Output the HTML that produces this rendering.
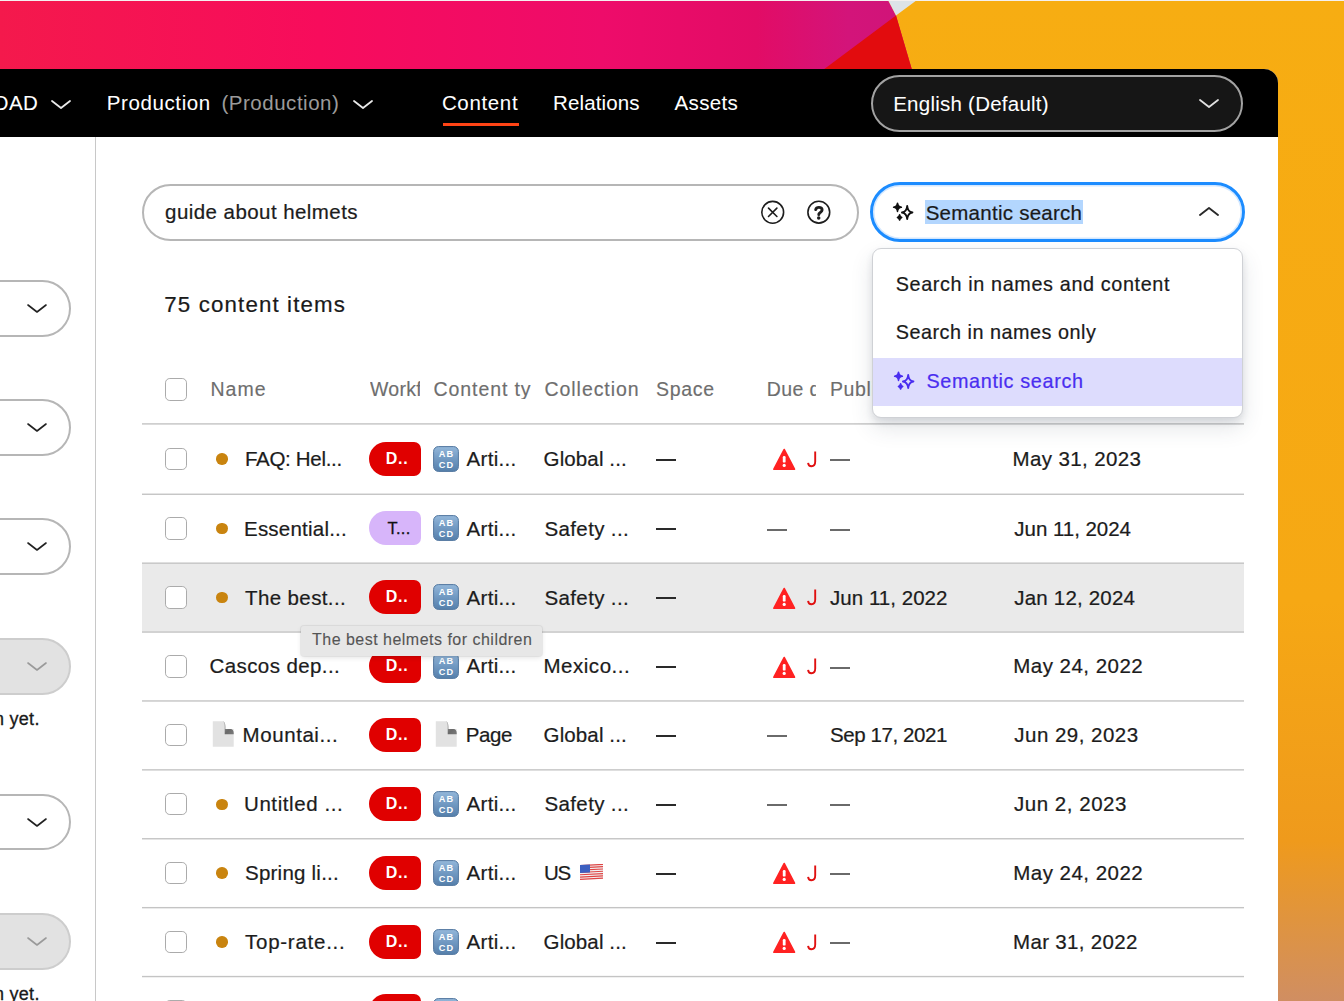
<!DOCTYPE html>
<html><head><meta charset="utf-8">
<style>
*{box-sizing:border-box;margin:0;padding:0}
html,body{width:1344px;height:1001px;overflow:hidden}
body{position:relative;font-family:"Liberation Sans",sans-serif;background:#f0a010}
.abs{position:absolute;display:block}
.t{position:absolute;white-space:nowrap;line-height:1;font-family:"Liberation Sans",sans-serif;-webkit-text-stroke-width:0.22px}
.pill{position:absolute;border-radius:40px}
.cb{position:absolute;width:22.5px;height:22.5px;border:1.7px solid #ababab;border-radius:4.8px;background:#fff}
.sep{position:absolute;left:142px;width:1102px;height:1.5px;background:#c9c9c9}
.wp{position:absolute;width:52px;height:34px;border-radius:17px 7px 7px 17px}
.dot{position:absolute;width:11.5px;height:11.5px;border-radius:50%;background:#c9840f}
.dash{position:absolute;height:2px;background:#2a2a2a}
.dashg{position:absolute;height:2px;background:#6a6a6a}
</style></head><body>

<svg width="1344" height="1001" viewBox="0 0 1344 1001" style="position:absolute;left:0;top:0">
<defs>
<linearGradient id="pk" x1="0" y1="0" x2="1" y2="0">
<stop offset="0" stop-color="#f4194c"/>
<stop offset="0.35" stop-color="#f70c5c"/>
<stop offset="0.66" stop-color="#ee0c6a"/>
<stop offset="0.83" stop-color="#e20c66"/>
<stop offset="0.93" stop-color="#d3147a"/>
<stop offset="1" stop-color="#d01478"/>
</linearGradient>
<linearGradient id="or" x1="0" y1="0" x2="0" y2="1">
<stop offset="0" stop-color="#f7ad12"/>
<stop offset="0.6" stop-color="#f6a814"/>
<stop offset="0.84" stop-color="#ef9a1c"/>
<stop offset="1" stop-color="#d08e62"/>
</linearGradient>
</defs>
<rect x="0" y="0" width="1344" height="1001" fill="url(#or)"/>
<path d="M0 0 H888 L896 15.5 L912 70 H0 Z" fill="url(#pk)"/>
<path d="M823 70 L896 15.5 L912 70 Z" fill="#e20c0e"/>
<path d="M888 0 H917 L896 15.5 Z" fill="#dde3e8"/>
<rect x="0" y="0" width="1344" height="1" fill="#f4f0f0"/>
</svg>

<div style="position:absolute;left:-20px;top:69px;width:1298px;height:960px;background:#fff;border-top-right-radius:14px;overflow:hidden"><div style="position:absolute;left:20px;top:-69px;width:1344px;height:1001px">
<div class="abs" style="left:-20px;top:69px;width:1298px;height:68.4px;background:#000"></div>
<div class="t" style="left:-19.22px;top:93.38px;font-size:20.5px;color:#fff;letter-spacing:0.400px;-webkit-text-stroke-width:0.05px">LOAD</div>
<svg class="abs" style="left:51px;top:99.5px" width="20" height="9" viewBox="0 0 20 9"><path d="M1 1 L10.0 8 L19 1" fill="none" stroke="#e8e8e8" stroke-width="1.8" stroke-linecap="round" stroke-linejoin="round"/></svg>
<div class="t" style="left:106.80px;top:93.38px;font-size:20.5px;color:#fff;letter-spacing:0.600px;-webkit-text-stroke-width:0.05px">Production</div>
<div class="t" style="left:221.50px;top:93.38px;font-size:20.5px;color:#9b9b9b;letter-spacing:0.515px;-webkit-text-stroke-width:0.05px">(Production)</div>
<svg class="abs" style="left:352.5px;top:99.5px" width="20" height="9" viewBox="0 0 20 9"><path d="M1 1 L10.0 8 L19 1" fill="none" stroke="#e8e8e8" stroke-width="1.8" stroke-linecap="round" stroke-linejoin="round"/></svg>
<div class="t" style="left:441.90px;top:93.38px;font-size:20.5px;color:#fff;letter-spacing:0.649px;-webkit-text-stroke-width:0.05px">Content</div>
<div class="abs" style="left:443px;top:123px;width:76px;height:3px;background:#ff4415"></div>
<div class="t" style="left:553.00px;top:93.38px;font-size:20.5px;color:#fff;letter-spacing:0.123px;-webkit-text-stroke-width:0.05px">Relations</div>
<div class="t" style="left:674.60px;top:93.38px;font-size:20.5px;color:#fff;letter-spacing:0.326px;-webkit-text-stroke-width:0.05px">Assets</div>
<div class="pill" style="left:871px;top:75px;width:372px;height:57px;background:#161616;border:2px solid #a2a2a2"></div>
<div class="t" style="left:893.20px;top:93.78px;font-size:20.5px;color:#fff;letter-spacing:0.243px;-webkit-text-stroke-width:0.05px">English (Default)</div>
<svg class="abs" style="left:1199px;top:99px" width="20" height="9" viewBox="0 0 20 9"><path d="M1 1 L10.0 8 L19 1" fill="none" stroke="#e0e0e0" stroke-width="1.8" stroke-linecap="round" stroke-linejoin="round"/></svg>
<div class="abs" style="left:94.6px;top:137px;width:1.3px;height:864px;background:#c8c8c8"></div>
<div class="pill" style="left:-300px;top:280px;width:370.5px;height:56.5px;background:#fff;border:2px solid #b6b6b6"></div>
<svg class="abs" style="left:27px;top:304px" width="20" height="9" viewBox="0 0 20 9"><path d="M1 1 L10.0 8 L19 1" fill="none" stroke="#222" stroke-width="1.6" stroke-linecap="round" stroke-linejoin="round"/></svg>
<div class="pill" style="left:-300px;top:399px;width:370.5px;height:56.5px;background:#fff;border:2px solid #b6b6b6"></div>
<svg class="abs" style="left:27px;top:423px" width="20" height="9" viewBox="0 0 20 9"><path d="M1 1 L10.0 8 L19 1" fill="none" stroke="#222" stroke-width="1.6" stroke-linecap="round" stroke-linejoin="round"/></svg>
<div class="pill" style="left:-300px;top:518px;width:370.5px;height:56.5px;background:#fff;border:2px solid #b6b6b6"></div>
<svg class="abs" style="left:27px;top:542px" width="20" height="9" viewBox="0 0 20 9"><path d="M1 1 L10.0 8 L19 1" fill="none" stroke="#222" stroke-width="1.6" stroke-linecap="round" stroke-linejoin="round"/></svg>
<div class="pill" style="left:-300px;top:638px;width:370.5px;height:56.5px;background:#e2e2e2;border:2px solid #cdcdcd"></div>
<svg class="abs" style="left:27px;top:662px" width="20" height="9" viewBox="0 0 20 9"><path d="M1 1 L10.0 8 L19 1" fill="none" stroke="#9a9a9a" stroke-width="1.6" stroke-linecap="round" stroke-linejoin="round"/></svg>
<div class="pill" style="left:-300px;top:793.5px;width:370.5px;height:56.5px;background:#fff;border:2px solid #b6b6b6"></div>
<svg class="abs" style="left:27px;top:817.5px" width="20" height="9" viewBox="0 0 20 9"><path d="M1 1 L10.0 8 L19 1" fill="none" stroke="#222" stroke-width="1.6" stroke-linecap="round" stroke-linejoin="round"/></svg>
<div class="pill" style="left:-300px;top:913px;width:370.5px;height:56.5px;background:#e2e2e2;border:2px solid #cdcdcd"></div>
<svg class="abs" style="left:27px;top:937px" width="20" height="9" viewBox="0 0 20 9"><path d="M1 1 L10.0 8 L19 1" fill="none" stroke="#9a9a9a" stroke-width="1.6" stroke-linecap="round" stroke-linejoin="round"/></svg>
<div class="t" style="left:-6.12px;top:709.50px;font-size:18px;color:#1a1a1a;letter-spacing:0.300px;-webkit-text-stroke:0.3px #1a1a1a">n yet.</div>
<div class="t" style="left:-6.12px;top:985.00px;font-size:18px;color:#1a1a1a;letter-spacing:0.300px;-webkit-text-stroke:0.3px #1a1a1a">n yet.</div>
<div class="pill" style="left:142px;top:184px;width:716.5px;height:56.5px;background:#fff;border:2px solid #b6b6b6"></div>
<div class="t" style="left:165.10px;top:202.17px;font-size:20.5px;color:#1c1c1c;letter-spacing:0.434px">guide about helmets</div>
<svg class="abs" style="left:760px;top:200px" width="25" height="25" viewBox="0 0 25 25"><circle cx="12.7" cy="12.3" r="10.9" fill="none" stroke="#1e1e1e" stroke-width="1.6"/><path d="M8.5 8.1 L16.9 16.5 M16.9 8.1 L8.5 16.5" stroke="#1e1e1e" stroke-width="1.6" stroke-linecap="round"/></svg>
<svg class="abs" style="left:806px;top:200px" width="25" height="25" viewBox="0 0 25 25"><circle cx="12.8" cy="12.2" r="10.9" fill="none" stroke="#1e1e1e" stroke-width="1.6"/><path d="M9.7 9.6 C10.1 8.1 11.3 7.4 12.9 7.4 C14.7 7.4 16.1 8.4 16.1 10 C16.1 11.8 13.8 12.3 13 13.7 L12.8 14.6" fill="none" stroke="#1e1e1e" stroke-width="2.9" stroke-linecap="round" stroke-linejoin="round"/><circle cx="12.7" cy="18.1" r="1.75" fill="#1e1e1e"/></svg>
<div class="pill" style="left:869.5px;top:182px;width:375px;height:60px;background:#fff;border:3px solid #1c8cff;box-shadow:inset 0 0 0 1.5px #d4e8ff"></div>
<svg class="abs" style="left:886px;top:196px" width="32" height="32" viewBox="0 0 32 32">
<path d="M21.2 9.8 Q21.75 15.95 26.5 16.5 Q21.75 17.05 21.2 23.2 Q20.65 17.05 15.899999999999999 16.5 Q20.65 15.95 21.2 9.8 Z" fill="none" stroke="#111" stroke-width="1.8" stroke-linejoin="round"/>
<path d="M11.5 7.200000000000001 Q11.95 10.850000000000001 15.4 11.3 Q11.95 11.75 11.5 15.4 Q11.05 11.75 7.6 11.3 Q11.05 10.850000000000001 11.5 7.200000000000001 Z" fill="#111" stroke="#111" stroke-width="1.5" stroke-linejoin="round"/>
<path d="M13.6 18.7 Q14.049999999999999 20.95 15.8 21.4 Q14.049999999999999 21.849999999999998 13.6 24.099999999999998 Q13.15 21.849999999999998 11.399999999999999 21.4 Q13.15 20.95 13.6 18.7 Z" fill="#111" stroke="#111" stroke-width="1.5" stroke-linejoin="round"/>
</svg>
<div class="abs" style="left:925px;top:200px;width:158px;height:24px;background:#b3d6fe"></div>
<div class="t" style="left:925.70px;top:202.77px;font-size:20.5px;color:#1a1a1a;letter-spacing:0.259px">Semantic search</div>
<svg class="abs" style="left:1199px;top:206.5px" width="20" height="9" viewBox="0 0 20 9"><path d="M1 8 L10.0 1 L19 8" fill="none" stroke="#2a2a2a" stroke-width="1.9" stroke-linecap="round" stroke-linejoin="round"/></svg>
<div class="t" style="left:164.30px;top:294.05px;font-size:22.3px;color:#1a1a1a;letter-spacing:1.136px">75 content items</div>
<div class="cb" style="left:164.5px;top:378.2px"></div>
<div class="t" style="left:210.40px;top:379.93px;font-size:19.5px;color:#6e6e6e;letter-spacing:1.076px;-webkit-text-stroke-width:0.15px">Name</div>
<div class="t" style="left:544.50px;top:379.93px;font-size:19.5px;color:#6e6e6e;letter-spacing:0.946px;-webkit-text-stroke-width:0.15px">Collection</div>
<div class="t" style="left:656.00px;top:379.93px;font-size:19.5px;color:#6e6e6e;letter-spacing:0.688px;-webkit-text-stroke-width:0.15px">Space</div>
<div class="t" style="left:370.00px;top:379.93px;font-size:19.5px;color:#6e6e6e;letter-spacing:0.270px;width:49.5px;overflow:hidden;-webkit-text-stroke-width:0.15px">Workflow</div>
<div class="t" style="left:433.60px;top:379.93px;font-size:19.5px;color:#6e6e6e;letter-spacing:0.903px;width:97.5px;overflow:hidden;-webkit-text-stroke-width:0.15px">Content type</div>
<div class="t" style="left:766.70px;top:379.93px;font-size:19.5px;color:#6e6e6e;letter-spacing:0.436px;width:49.5px;overflow:hidden;-webkit-text-stroke-width:0.15px">Due date</div>
<div class="t" style="left:830.00px;top:379.93px;font-size:19.5px;color:#6e6e6e;letter-spacing:0.568px;width:42px;overflow:hidden;-webkit-text-stroke-width:0.15px">Published</div>
<div class="abs" style="left:142px;top:563.16px;width:1102px;height:68.90px;background:#eaeaea"></div>
<svg class="abs" style="left:142px;top:0px" width="1102" height="1001" viewBox="0 0 1102 1001"><rect x="0" y="423.20" width="1102" height="1.4" fill="#c4c4c4"/><rect x="0" y="493.56" width="1102" height="1.4" fill="#c4c4c4"/><rect x="0" y="562.46" width="1102" height="1.4" fill="#c4c4c4"/><rect x="0" y="631.36" width="1102" height="1.4" fill="#c4c4c4"/><rect x="0" y="700.26" width="1102" height="1.4" fill="#c4c4c4"/><rect x="0" y="769.16" width="1102" height="1.4" fill="#c4c4c4"/><rect x="0" y="838.06" width="1102" height="1.4" fill="#c4c4c4"/><rect x="0" y="906.96" width="1102" height="1.4" fill="#c4c4c4"/><rect x="0" y="975.86" width="1102" height="1.4" fill="#c4c4c4"/></svg>
<div class="cb" style="left:164.5px;top:447.58px"></div>
<div class="dot" style="left:216.3px;top:453.33px"></div>
<div class="t" style="left:245.00px;top:449.05px;font-size:20.5px;color:#1c1c1c;letter-spacing:-0.315px">FAQ: Hel...</div>
<div class="wp" style="left:369.3px;top:441.58px;background:#e00000"></div>
<div class="t" style="left:385.80px;top:450.58px;font-size:16px;color:#fff;letter-spacing:0.700px;font-weight:bold;-webkit-text-stroke-width:0">D..</div>
<svg class="abs" style="left:433px;top:445.58px" width="26" height="26" viewBox="0 0 26 26"><defs><linearGradient id="ga0" x1="0" y1="0" x2="0" y2="1"><stop offset="0" stop-color="#93b7da"/><stop offset="0.5" stop-color="#7199c2"/><stop offset="1" stop-color="#557fab"/></linearGradient></defs><rect x="0.6" y="0.6" width="24.8" height="24.8" rx="4.8" fill="url(#ga0)" stroke="#52779f" stroke-width="1"/><text x="13.5" y="11.4" text-anchor="middle" font-family="Liberation Sans" font-weight="bold" font-size="9.2" letter-spacing="1" fill="#fff">AB</text><text x="13.5" y="21.6" text-anchor="middle" font-family="Liberation Sans" font-weight="bold" font-size="9.2" letter-spacing="1" fill="#fff">CD</text></svg>
<div class="t" style="left:466.50px;top:449.05px;font-size:20.5px;color:#1c1c1c;letter-spacing:0.326px">Arti...</div>
<div class="t" style="left:543.60px;top:449.05px;font-size:20.5px;color:#1c1c1c;letter-spacing:0.117px">Global ...</div>
<div class="dash" style="left:655.5px;top:458.58px;width:20px"></div>
<svg class="abs" style="left:773px;top:448.28px" width="23" height="23" viewBox="0 0 23 23"><path d="M11.2 1.6 L21.4 21.2 H1 Z" fill="#ff2222" stroke="#ff2222" stroke-width="1.8" stroke-linejoin="round"/><rect x="9.8" y="8" width="2.8" height="6.6" rx="1.2" fill="#fff"/><circle cx="11.2" cy="17.4" r="1.6" fill="#fff"/></svg>
<svg class="abs" style="left:805px;top:450.88px" width="14" height="18" viewBox="0 0 14 18"><path d="M10.2 0.5 V10.6 C10.2 13.8 8.6 15.3 6.5 15.3 C4.5 15.3 3.3 14.1 3.1 11.9" fill="none" stroke="#e01010" stroke-width="1.9" stroke-linecap="butt"/></svg>
<div class="dashg" style="left:830px;top:459.08px;width:20px"></div>
<div class="t" style="left:1012.60px;top:449.05px;font-size:20.5px;color:#1c1c1c;letter-spacing:0.371px">May 31, 2023</div>
<div class="cb" style="left:164.5px;top:517.21px"></div>
<div class="dot" style="left:216.3px;top:522.96px"></div>
<div class="t" style="left:244.00px;top:518.69px;font-size:20.5px;color:#1c1c1c;letter-spacing:0.221px">Essential...</div>
<div class="wp" style="left:369.3px;top:511.21px;background:#d7b5fa"></div>
<div class="t" style="left:387.50px;top:519.79px;font-size:16.5px;color:#111;letter-spacing:0.261px;-webkit-text-stroke:0.3px #111">T...</div>
<svg class="abs" style="left:433px;top:515.21px" width="26" height="26" viewBox="0 0 26 26"><defs><linearGradient id="ga1" x1="0" y1="0" x2="0" y2="1"><stop offset="0" stop-color="#93b7da"/><stop offset="0.5" stop-color="#7199c2"/><stop offset="1" stop-color="#557fab"/></linearGradient></defs><rect x="0.6" y="0.6" width="24.8" height="24.8" rx="4.8" fill="url(#ga1)" stroke="#52779f" stroke-width="1"/><text x="13.5" y="11.4" text-anchor="middle" font-family="Liberation Sans" font-weight="bold" font-size="9.2" letter-spacing="1" fill="#fff">AB</text><text x="13.5" y="21.6" text-anchor="middle" font-family="Liberation Sans" font-weight="bold" font-size="9.2" letter-spacing="1" fill="#fff">CD</text></svg>
<div class="t" style="left:466.50px;top:518.69px;font-size:20.5px;color:#1c1c1c;letter-spacing:0.326px">Arti...</div>
<div class="t" style="left:544.50px;top:518.69px;font-size:20.5px;color:#1c1c1c;letter-spacing:0.366px">Safety ...</div>
<div class="dash" style="left:655.5px;top:528.21px;width:20px"></div>
<div class="dashg" style="left:767px;top:528.71px;width:20px"></div>
<div class="dashg" style="left:830px;top:528.71px;width:20px"></div>
<div class="t" style="left:1014.30px;top:518.69px;font-size:20.5px;color:#1c1c1c;letter-spacing:-0.029px">Jun 11, 2024</div>
<div class="cb" style="left:164.5px;top:586.1099999999999px"></div>
<div class="dot" style="left:216.3px;top:591.86px"></div>
<div class="t" style="left:245.00px;top:587.58px;font-size:20.5px;color:#1c1c1c;letter-spacing:0.384px">The best...</div>
<div class="wp" style="left:369.3px;top:580.11px;background:#e00000"></div>
<div class="t" style="left:385.80px;top:589.11px;font-size:16px;color:#fff;letter-spacing:0.700px;font-weight:bold;-webkit-text-stroke-width:0">D..</div>
<svg class="abs" style="left:433px;top:584.1099999999999px" width="26" height="26" viewBox="0 0 26 26"><defs><linearGradient id="ga2" x1="0" y1="0" x2="0" y2="1"><stop offset="0" stop-color="#93b7da"/><stop offset="0.5" stop-color="#7199c2"/><stop offset="1" stop-color="#557fab"/></linearGradient></defs><rect x="0.6" y="0.6" width="24.8" height="24.8" rx="4.8" fill="url(#ga2)" stroke="#52779f" stroke-width="1"/><text x="13.5" y="11.4" text-anchor="middle" font-family="Liberation Sans" font-weight="bold" font-size="9.2" letter-spacing="1" fill="#fff">AB</text><text x="13.5" y="21.6" text-anchor="middle" font-family="Liberation Sans" font-weight="bold" font-size="9.2" letter-spacing="1" fill="#fff">CD</text></svg>
<div class="t" style="left:466.50px;top:587.58px;font-size:20.5px;color:#1c1c1c;letter-spacing:0.326px">Arti...</div>
<div class="t" style="left:544.50px;top:587.58px;font-size:20.5px;color:#1c1c1c;letter-spacing:0.366px">Safety ...</div>
<div class="dash" style="left:655.5px;top:597.11px;width:20px"></div>
<svg class="abs" style="left:773px;top:586.81px" width="23" height="23" viewBox="0 0 23 23"><path d="M11.2 1.6 L21.4 21.2 H1 Z" fill="#ff2222" stroke="#ff2222" stroke-width="1.8" stroke-linejoin="round"/><rect x="9.8" y="8" width="2.8" height="6.6" rx="1.2" fill="#fff"/><circle cx="11.2" cy="17.4" r="1.6" fill="#fff"/></svg>
<svg class="abs" style="left:805px;top:589.41px" width="14" height="18" viewBox="0 0 14 18"><path d="M10.2 0.5 V10.6 C10.2 13.8 8.6 15.3 6.5 15.3 C4.5 15.3 3.3 14.1 3.1 11.9" fill="none" stroke="#e01010" stroke-width="1.9" stroke-linecap="butt"/></svg>
<div class="t" style="left:830.10px;top:587.58px;font-size:20.5px;color:#1c1c1c;letter-spacing:0.025px">Jun 11, 2022</div>
<div class="t" style="left:1014.30px;top:587.58px;font-size:20.5px;color:#1c1c1c;letter-spacing:0.187px">Jan 12, 2024</div>
<div class="cb" style="left:164.5px;top:655.01px"></div>
<div class="t" style="left:209.50px;top:656.49px;font-size:20.5px;color:#1c1c1c;letter-spacing:0.404px">Cascos dep...</div>
<div class="wp" style="left:369.3px;top:649.01px;background:#e00000"></div>
<div class="t" style="left:385.80px;top:658.01px;font-size:16px;color:#fff;letter-spacing:0.700px;font-weight:bold;-webkit-text-stroke-width:0">D..</div>
<svg class="abs" style="left:433px;top:653.01px" width="26" height="26" viewBox="0 0 26 26"><defs><linearGradient id="ga3" x1="0" y1="0" x2="0" y2="1"><stop offset="0" stop-color="#93b7da"/><stop offset="0.5" stop-color="#7199c2"/><stop offset="1" stop-color="#557fab"/></linearGradient></defs><rect x="0.6" y="0.6" width="24.8" height="24.8" rx="4.8" fill="url(#ga3)" stroke="#52779f" stroke-width="1"/><text x="13.5" y="11.4" text-anchor="middle" font-family="Liberation Sans" font-weight="bold" font-size="9.2" letter-spacing="1" fill="#fff">AB</text><text x="13.5" y="21.6" text-anchor="middle" font-family="Liberation Sans" font-weight="bold" font-size="9.2" letter-spacing="1" fill="#fff">CD</text></svg>
<div class="t" style="left:466.50px;top:656.49px;font-size:20.5px;color:#1c1c1c;letter-spacing:0.326px">Arti...</div>
<div class="t" style="left:543.50px;top:656.49px;font-size:20.5px;color:#1c1c1c;letter-spacing:0.522px">Mexico...</div>
<div class="dash" style="left:655.5px;top:666.01px;width:20px"></div>
<svg class="abs" style="left:773px;top:655.71px" width="23" height="23" viewBox="0 0 23 23"><path d="M11.2 1.6 L21.4 21.2 H1 Z" fill="#ff2222" stroke="#ff2222" stroke-width="1.8" stroke-linejoin="round"/><rect x="9.8" y="8" width="2.8" height="6.6" rx="1.2" fill="#fff"/><circle cx="11.2" cy="17.4" r="1.6" fill="#fff"/></svg>
<svg class="abs" style="left:805px;top:658.31px" width="14" height="18" viewBox="0 0 14 18"><path d="M10.2 0.5 V10.6 C10.2 13.8 8.6 15.3 6.5 15.3 C4.5 15.3 3.3 14.1 3.1 11.9" fill="none" stroke="#e01010" stroke-width="1.9" stroke-linecap="butt"/></svg>
<div class="dashg" style="left:830px;top:666.51px;width:20px"></div>
<div class="t" style="left:1013.30px;top:656.49px;font-size:20.5px;color:#1c1c1c;letter-spacing:0.471px">May 24, 2022</div>
<div class="cb" style="left:164.5px;top:723.9100000000001px"></div>
<svg class="abs" style="left:212px;top:721.4100000000001px" width="23" height="27" viewBox="0 0 23 27"><defs><linearGradient id="gf4" x1="0" y1="0" x2="1" y2="1"><stop offset="0" stop-color="#a0a0a0"/><stop offset="0.6" stop-color="#6a6a6a"/><stop offset="1" stop-color="#7a7a7a"/></linearGradient></defs><path d="M0.8 0.3 H10.8 C12 0.3 12.8 1.6 12.8 3.2 V8 H21.7 V25.8 H0.8 Z" fill="#e2e2e2"/><path d="M10.8 0.3 C12.6 0.5 13.4 2.8 13.4 5.2 V7.9 H18.6 C20.6 7.9 21.7 9.8 21.7 12 V13.2 H12.7 V5 C12.7 2.6 12.2 1.1 10.8 0.3 Z" fill="url(#gf4)"/></svg>
<div class="t" style="left:242.60px;top:725.39px;font-size:20.5px;color:#1c1c1c;letter-spacing:0.564px">Mountai...</div>
<div class="wp" style="left:369.3px;top:717.91px;background:#e00000"></div>
<div class="t" style="left:385.80px;top:726.91px;font-size:16px;color:#fff;letter-spacing:0.700px;font-weight:bold;-webkit-text-stroke-width:0">D..</div>
<svg class="abs" style="left:435px;top:721.4100000000001px" width="23" height="27" viewBox="0 0 23 27"><defs><linearGradient id="gf104" x1="0" y1="0" x2="1" y2="1"><stop offset="0" stop-color="#a0a0a0"/><stop offset="0.6" stop-color="#6a6a6a"/><stop offset="1" stop-color="#7a7a7a"/></linearGradient></defs><path d="M0.8 0.3 H10.8 C12 0.3 12.8 1.6 12.8 3.2 V8 H21.7 V25.8 H0.8 Z" fill="#e2e2e2"/><path d="M10.8 0.3 C12.6 0.5 13.4 2.8 13.4 5.2 V7.9 H18.6 C20.6 7.9 21.7 9.8 21.7 12 V13.2 H12.7 V5 C12.7 2.6 12.2 1.1 10.8 0.3 Z" fill="url(#gf104)"/></svg>
<div class="t" style="left:465.70px;top:725.39px;font-size:20.5px;color:#1c1c1c;letter-spacing:-0.425px">Page</div>
<div class="t" style="left:543.60px;top:725.39px;font-size:20.5px;color:#1c1c1c;letter-spacing:0.117px">Global ...</div>
<div class="dash" style="left:655.5px;top:734.91px;width:20px"></div>
<div class="dashg" style="left:767px;top:735.41px;width:20px"></div>
<div class="t" style="left:830.00px;top:725.39px;font-size:20.5px;color:#1c1c1c;letter-spacing:-0.415px">Sep 17, 2021</div>
<div class="t" style="left:1014.30px;top:725.39px;font-size:20.5px;color:#1c1c1c;letter-spacing:0.478px">Jun 29, 2023</div>
<div class="cb" style="left:164.5px;top:792.81px"></div>
<div class="dot" style="left:216.3px;top:798.56px"></div>
<div class="t" style="left:244.00px;top:794.28px;font-size:20.5px;color:#1c1c1c;letter-spacing:0.582px">Untitled ...</div>
<div class="wp" style="left:369.3px;top:786.81px;background:#e00000"></div>
<div class="t" style="left:385.80px;top:795.81px;font-size:16px;color:#fff;letter-spacing:0.700px;font-weight:bold;-webkit-text-stroke-width:0">D..</div>
<svg class="abs" style="left:433px;top:790.81px" width="26" height="26" viewBox="0 0 26 26"><defs><linearGradient id="ga5" x1="0" y1="0" x2="0" y2="1"><stop offset="0" stop-color="#93b7da"/><stop offset="0.5" stop-color="#7199c2"/><stop offset="1" stop-color="#557fab"/></linearGradient></defs><rect x="0.6" y="0.6" width="24.8" height="24.8" rx="4.8" fill="url(#ga5)" stroke="#52779f" stroke-width="1"/><text x="13.5" y="11.4" text-anchor="middle" font-family="Liberation Sans" font-weight="bold" font-size="9.2" letter-spacing="1" fill="#fff">AB</text><text x="13.5" y="21.6" text-anchor="middle" font-family="Liberation Sans" font-weight="bold" font-size="9.2" letter-spacing="1" fill="#fff">CD</text></svg>
<div class="t" style="left:466.50px;top:794.28px;font-size:20.5px;color:#1c1c1c;letter-spacing:0.326px">Arti...</div>
<div class="t" style="left:544.50px;top:794.28px;font-size:20.5px;color:#1c1c1c;letter-spacing:0.366px">Safety ...</div>
<div class="dash" style="left:655.5px;top:803.81px;width:20px"></div>
<div class="dashg" style="left:767px;top:804.31px;width:20px"></div>
<div class="dashg" style="left:830px;top:804.31px;width:20px"></div>
<div class="t" style="left:1014.00px;top:794.28px;font-size:20.5px;color:#1c1c1c;letter-spacing:0.526px">Jun 2, 2023</div>
<div class="cb" style="left:164.5px;top:861.71px"></div>
<div class="dot" style="left:216.3px;top:867.46px"></div>
<div class="t" style="left:245.00px;top:863.19px;font-size:20.5px;color:#1c1c1c;letter-spacing:0.232px">Spring li...</div>
<div class="wp" style="left:369.3px;top:855.71px;background:#e00000"></div>
<div class="t" style="left:385.80px;top:864.71px;font-size:16px;color:#fff;letter-spacing:0.700px;font-weight:bold;-webkit-text-stroke-width:0">D..</div>
<svg class="abs" style="left:433px;top:859.71px" width="26" height="26" viewBox="0 0 26 26"><defs><linearGradient id="ga6" x1="0" y1="0" x2="0" y2="1"><stop offset="0" stop-color="#93b7da"/><stop offset="0.5" stop-color="#7199c2"/><stop offset="1" stop-color="#557fab"/></linearGradient></defs><rect x="0.6" y="0.6" width="24.8" height="24.8" rx="4.8" fill="url(#ga6)" stroke="#52779f" stroke-width="1"/><text x="13.5" y="11.4" text-anchor="middle" font-family="Liberation Sans" font-weight="bold" font-size="9.2" letter-spacing="1" fill="#fff">AB</text><text x="13.5" y="21.6" text-anchor="middle" font-family="Liberation Sans" font-weight="bold" font-size="9.2" letter-spacing="1" fill="#fff">CD</text></svg>
<div class="t" style="left:466.50px;top:863.19px;font-size:20.5px;color:#1c1c1c;letter-spacing:0.326px">Arti...</div>
<div class="t" style="left:544.00px;top:863.19px;font-size:20.5px;color:#1c1c1c;letter-spacing:-1.304px">US</div>
<svg class="abs" style="left:579.5px;top:864.21px" width="23" height="16" viewBox="0 0 23 16"><g transform="skewY(-3) translate(0 1)"><rect width="23" height="15" fill="#f2f2f2"/><rect x="0" y="0.00" width="23" height="1.15" fill="#df4444"/><rect x="0" y="2.30" width="23" height="1.15" fill="#df4444"/><rect x="0" y="4.60" width="23" height="1.15" fill="#df4444"/><rect x="0" y="6.90" width="23" height="1.15" fill="#df4444"/><rect x="0" y="9.20" width="23" height="1.15" fill="#df4444"/><rect x="0" y="11.50" width="23" height="1.15" fill="#df4444"/><rect x="0" y="13.80" width="23" height="1.15" fill="#df4444"/><rect x="0" y="0" width="10" height="8" fill="#3c5fc0"/></g></svg>
<div class="dash" style="left:655.5px;top:872.71px;width:20px"></div>
<svg class="abs" style="left:773px;top:862.4100000000001px" width="23" height="23" viewBox="0 0 23 23"><path d="M11.2 1.6 L21.4 21.2 H1 Z" fill="#ff2222" stroke="#ff2222" stroke-width="1.8" stroke-linejoin="round"/><rect x="9.8" y="8" width="2.8" height="6.6" rx="1.2" fill="#fff"/><circle cx="11.2" cy="17.4" r="1.6" fill="#fff"/></svg>
<svg class="abs" style="left:805px;top:865.01px" width="14" height="18" viewBox="0 0 14 18"><path d="M10.2 0.5 V10.6 C10.2 13.8 8.6 15.3 6.5 15.3 C4.5 15.3 3.3 14.1 3.1 11.9" fill="none" stroke="#e01010" stroke-width="1.9" stroke-linecap="butt"/></svg>
<div class="dashg" style="left:830px;top:873.21px;width:20px"></div>
<div class="t" style="left:1013.30px;top:863.19px;font-size:20.5px;color:#1c1c1c;letter-spacing:0.471px">May 24, 2022</div>
<div class="cb" style="left:164.5px;top:930.6100000000001px"></div>
<div class="dot" style="left:216.3px;top:936.36px"></div>
<div class="t" style="left:245.00px;top:932.09px;font-size:20.5px;color:#1c1c1c;letter-spacing:0.741px">Top-rate...</div>
<div class="wp" style="left:369.3px;top:924.61px;background:#e00000"></div>
<div class="t" style="left:385.80px;top:933.61px;font-size:16px;color:#fff;letter-spacing:0.700px;font-weight:bold;-webkit-text-stroke-width:0">D..</div>
<svg class="abs" style="left:433px;top:928.6100000000001px" width="26" height="26" viewBox="0 0 26 26"><defs><linearGradient id="ga7" x1="0" y1="0" x2="0" y2="1"><stop offset="0" stop-color="#93b7da"/><stop offset="0.5" stop-color="#7199c2"/><stop offset="1" stop-color="#557fab"/></linearGradient></defs><rect x="0.6" y="0.6" width="24.8" height="24.8" rx="4.8" fill="url(#ga7)" stroke="#52779f" stroke-width="1"/><text x="13.5" y="11.4" text-anchor="middle" font-family="Liberation Sans" font-weight="bold" font-size="9.2" letter-spacing="1" fill="#fff">AB</text><text x="13.5" y="21.6" text-anchor="middle" font-family="Liberation Sans" font-weight="bold" font-size="9.2" letter-spacing="1" fill="#fff">CD</text></svg>
<div class="t" style="left:466.50px;top:932.09px;font-size:20.5px;color:#1c1c1c;letter-spacing:0.326px">Arti...</div>
<div class="t" style="left:543.60px;top:932.09px;font-size:20.5px;color:#1c1c1c;letter-spacing:0.117px">Global ...</div>
<div class="dash" style="left:655.5px;top:941.61px;width:20px"></div>
<svg class="abs" style="left:773px;top:931.3100000000002px" width="23" height="23" viewBox="0 0 23 23"><path d="M11.2 1.6 L21.4 21.2 H1 Z" fill="#ff2222" stroke="#ff2222" stroke-width="1.8" stroke-linejoin="round"/><rect x="9.8" y="8" width="2.8" height="6.6" rx="1.2" fill="#fff"/><circle cx="11.2" cy="17.4" r="1.6" fill="#fff"/></svg>
<svg class="abs" style="left:805px;top:933.91px" width="14" height="18" viewBox="0 0 14 18"><path d="M10.2 0.5 V10.6 C10.2 13.8 8.6 15.3 6.5 15.3 C4.5 15.3 3.3 14.1 3.1 11.9" fill="none" stroke="#e01010" stroke-width="1.9" stroke-linecap="butt"/></svg>
<div class="dashg" style="left:830px;top:942.11px;width:20px"></div>
<div class="t" style="left:1013.00px;top:932.09px;font-size:20.5px;color:#1c1c1c;letter-spacing:0.328px">Mar 31, 2022</div>
<div class="cb" style="left:164.5px;top:999.51px"></div>
<div class="dot" style="left:216.3px;top:1005.26px"></div>
<div class="wp" style="left:369.3px;top:993.51px;background:#e00000"></div>
<div class="t" style="left:385.80px;top:1002.51px;font-size:16px;color:#fff;letter-spacing:0.700px;font-weight:bold;-webkit-text-stroke-width:0">D..</div>
<svg class="abs" style="left:433px;top:997.51px" width="26" height="26" viewBox="0 0 26 26"><defs><linearGradient id="ga8" x1="0" y1="0" x2="0" y2="1"><stop offset="0" stop-color="#93b7da"/><stop offset="0.5" stop-color="#7199c2"/><stop offset="1" stop-color="#557fab"/></linearGradient></defs><rect x="0.6" y="0.6" width="24.8" height="24.8" rx="4.8" fill="url(#ga8)" stroke="#52779f" stroke-width="1"/><text x="13.5" y="11.4" text-anchor="middle" font-family="Liberation Sans" font-weight="bold" font-size="9.2" letter-spacing="1" fill="#fff">AB</text><text x="13.5" y="21.6" text-anchor="middle" font-family="Liberation Sans" font-weight="bold" font-size="9.2" letter-spacing="1" fill="#fff">CD</text></svg>
<div class="t" style="left:466.50px;top:1000.99px;font-size:20.5px;color:#1c1c1c;letter-spacing:0.326px">Arti...</div>
<div class="dash" style="left:655.5px;top:1010.51px;width:20px"></div>
<div class="dashg" style="left:767px;top:1011.01px;width:20px"></div>
<div class="dashg" style="left:830px;top:1011.01px;width:20px"></div>
<div class="abs" style="left:301px;top:626px;width:241px;height:29.5px;background:#e7e7e7;border-radius:3px;box-shadow:0 0 0 1px rgba(0,0,0,0.05),0 2px 5px rgba(0,0,0,0.10)"></div>
<div class="t" style="left:312.00px;top:632.20px;font-size:16px;color:#555;letter-spacing:0.485px;-webkit-text-stroke-width:0.1px">The best helmets for children</div>
<div class="abs" style="left:872px;top:247.5px;width:371px;height:170px;background:#fff;border:1px solid #cfd1d5;border-radius:9px;box-shadow:0 10px 22px rgba(50,60,80,0.13),0 4px 7px rgba(50,60,80,0.12);overflow:hidden"><div class="abs" style="left:0;top:109px;width:371px;height:48px;background:#dddcfd"></div></div>
<div class="t" style="left:895.70px;top:274.57px;font-size:19.8px;color:#1a1a1a;letter-spacing:0.634px">Search in names and content</div>
<div class="t" style="left:895.70px;top:322.97px;font-size:19.8px;color:#1a1a1a;letter-spacing:0.525px">Search in names only</div>
<svg class="abs" style="left:887.3px;top:365.2px" width="32" height="32" viewBox="0 0 32 32">
<path d="M21.2 9.8 Q21.75 15.95 26.5 16.5 Q21.75 17.05 21.2 23.2 Q20.65 17.05 15.899999999999999 16.5 Q20.65 15.95 21.2 9.8 Z" fill="none" stroke="#4a2ef0" stroke-width="1.8" stroke-linejoin="round"/>
<path d="M11.5 7.200000000000001 Q11.95 10.850000000000001 15.4 11.3 Q11.95 11.75 11.5 15.4 Q11.05 11.75 7.6 11.3 Q11.05 10.850000000000001 11.5 7.200000000000001 Z" fill="#4a2ef0" stroke="#4a2ef0" stroke-width="1.5" stroke-linejoin="round"/>
<path d="M13.6 18.7 Q14.049999999999999 20.95 15.8 21.4 Q14.049999999999999 21.849999999999998 13.6 24.099999999999998 Q13.15 21.849999999999998 11.399999999999999 21.4 Q13.15 20.95 13.6 18.7 Z" fill="#4a2ef0" stroke="#4a2ef0" stroke-width="1.5" stroke-linejoin="round"/>
</svg>
<div class="t" style="left:926.40px;top:372.17px;font-size:19.8px;color:#4a2ef0;letter-spacing:0.663px">Semantic search</div>
</div></div>
</body></html>
